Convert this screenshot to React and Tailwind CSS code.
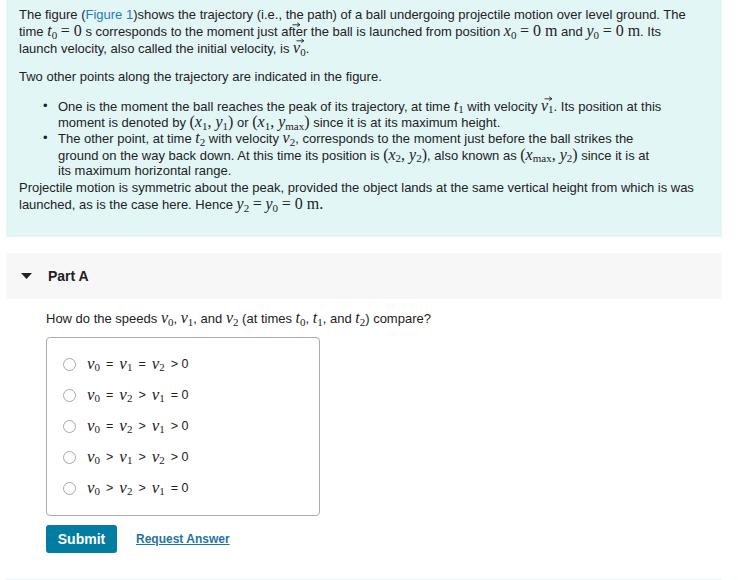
import React from "react";

function I({ children }) {
  return <span className="font-['Liberation_Serif','DejaVu_Serif',serif] italic text-[16px] leading-none">{children}</span>;
}
function R({ children }) {
  return <span className="font-['Liberation_Serif','DejaVu_Serif',serif] text-[16px] leading-none">{children}</span>;
}
function Sub({ children }) {
  return <sub className="font-['Liberation_Serif','DejaVu_Serif',serif] not-italic text-[11px] leading-none">{children}</sub>;
}
function Arrow({ className }) {
  return (
    <svg className={className} width="9" height="5" viewBox="0 0 9 5">
      <path d="M0.5 2.8 H7.5 M5.2 0.8 L8 2.8 L5.2 4.5" stroke="#222" strokeWidth="0.9" fill="none" />
    </svg>
  );
}
function Vec({ children, sub, extra }) {
  return (
    <span className="relative inline-block leading-none">
      <I>{children}</I>
      <Sub>{sub}</Sub>
      <Arrow className="absolute left-[3px] top-[-2px]" />
      {extra && <Arrow className="absolute left-[-1px] top-[-18px]" />}
    </span>
  );
}

function Line({ children, className = "" }) {
  return <div className={`whitespace-nowrap h-[16.4px] leading-[16.4px] ${className}`}>{children}</div>;
}

function Opt({ children }) {
  return (
    <div className="flex items-center h-[31px]">
      <span className="w-[13px] h-[13px] rounded-full border border-[#a8a8a8] bg-white shrink-0" />
      <span className="ml-[11px] whitespace-nowrap text-[12.5px] text-[#222] flex items-center gap-[6px]">{children}</span>
    </div>
  );
}

function OV({ s }) {
  return (
    <span>
      <span className="font-['Liberation_Serif','DejaVu_Serif',serif] italic text-[17px] leading-none">v</span>
      <Sub>{s}</Sub>
    </span>
  );
}

export default function App() {
  return (
    <div className="w-[756px] h-[580px] bg-white overflow-hidden font-['Liberation_Sans',Arial,sans-serif] text-[13px] text-[#222]">
      <div className="ml-[6px] w-[716px] h-[237px] bg-[#e2f6f6] pl-[13px] pt-[7px]">
        <Line>
          The figure (<span className="text-[#2a7bb8]">Figure 1</span>)shows the trajectory (i.e., the path) of a ball undergoing projectile motion over level ground. The
        </Line>
        <Line>
          time <I>t</I><Sub>0</Sub> <R>= 0</R> s corresponds to the moment just after the ball is launched from position <I>x</I><Sub>0</Sub> <R>= 0 m</R> and <I>y</I><Sub>0</Sub> <R>= 0 m</R>. Its
        </Line>
        <Line>
          launch velocity, also called the initial velocity, is <Vec sub="0" extra>v</Vec>.
        </Line>
        <Line className="mt-[13px]">Two other points along the trajectory are indicated in the figure.</Line>
        <div className="mt-[12px]">
          <div className="flex">
            <span className="w-[39px] pl-[24px] leading-[16.4px]">•</span>
            <div>
              <Line>
                One is the moment the ball reaches the peak of its trajectory, at time <I>t</I><Sub>1</Sub> with velocity <Vec sub="1">v</Vec>. Its position at this
              </Line>
              <Line>
                moment is denoted by <R>(</R><I>x</I><Sub>1</Sub><R>, </R><I>y</I><Sub>1</Sub><R>)</R> or <R>(</R><I>x</I><Sub>1</Sub><R>, </R><I>y</I><Sub>max</Sub><R>)</R> since it is at its maximum height.
              </Line>
            </div>
          </div>
          <div className="flex">
            <span className="w-[39px] pl-[24px] leading-[16.4px]">•</span>
            <div>
              <Line>
                The other point, at time <I>t</I><Sub>2</Sub> with velocity <I>v</I><Sub>2</Sub>, corresponds to the moment just before the ball strikes the
              </Line>
              <Line>
                ground on the way back down. At this time its position is <R>(</R><I>x</I><Sub>2</Sub><R>, </R><I>y</I><Sub>2</Sub><R>)</R>, also known as <R>(</R><I>x</I><Sub>max</Sub><R>, </R><I>y</I><Sub>2</Sub><R>)</R> since it is at
              </Line>
              <Line>its maximum horizontal range.</Line>
            </div>
          </div>
        </div>
        <Line>Projectile motion is symmetric about the peak, provided the object lands at the same vertical height from which is was</Line>
        <Line>
          launched, as is the case here. Hence <I>y</I><Sub>2</Sub> <R>=</R> <I>y</I><Sub>0</Sub> <R>= 0 m.</R>
        </Line>
      </div>

      <div className="ml-[6px] mt-[16px] w-[716px] h-[46px] bg-[#f7f7f7] flex items-center">
        <svg className="ml-[15px]" width="11" height="6" viewBox="0 0 11 6">
          <path d="M0 0 H11 L5.5 6 Z" fill="#222" />
        </svg>
        <span className="ml-[16px] font-bold text-[14px] text-[#222]">Part A</span>
      </div>

      <div className="ml-[46px]">
        <div className="mt-[11px] h-[16px] leading-[16px] whitespace-nowrap">
          How do the speeds <I>v</I><Sub>0</Sub>, <I>v</I><Sub>1</Sub>, and <I>v</I><Sub>2</Sub> (at times <I>t</I><Sub>0</Sub>, <I>t</I><Sub>1</Sub>, and <I>t</I><Sub>2</Sub>) compare?
        </div>
        <div className="mt-[11px] w-[274px] h-[179px] border border-[#ababab] rounded-[4px] pl-[16px] pt-[11px]">
          <Opt><OV s="0" /><span>=</span><OV s="1" /><span>=</span><OV s="2" /><span>&gt; 0</span></Opt>
          <Opt><OV s="0" /><span>=</span><OV s="2" /><span>&gt;</span><OV s="1" /><span>= 0</span></Opt>
          <Opt><OV s="0" /><span>=</span><OV s="2" /><span>&gt;</span><OV s="1" /><span>&gt; 0</span></Opt>
          <Opt><OV s="0" /><span>&gt;</span><OV s="1" /><span>&gt;</span><OV s="2" /><span>&gt; 0</span></Opt>
          <Opt><OV s="0" /><span>&gt;</span><OV s="2" /><span>&gt;</span><OV s="1" /><span>= 0</span></Opt>
        </div>
        <div className="mt-[9px] flex items-center">
          <button className="w-[71px] h-[28px] bg-[#037ca1] rounded-[3px] text-white font-bold text-[14px]">Submit</button>
          <span className="ml-[19px] font-bold text-[12px] text-[#1f73a6] underline">Request Answer</span>
        </div>
      </div>

      <div className="ml-[6px] mt-[26px] w-[716px] h-[10px] bg-[#e2f6f6]" />
    </div>
  );
}
